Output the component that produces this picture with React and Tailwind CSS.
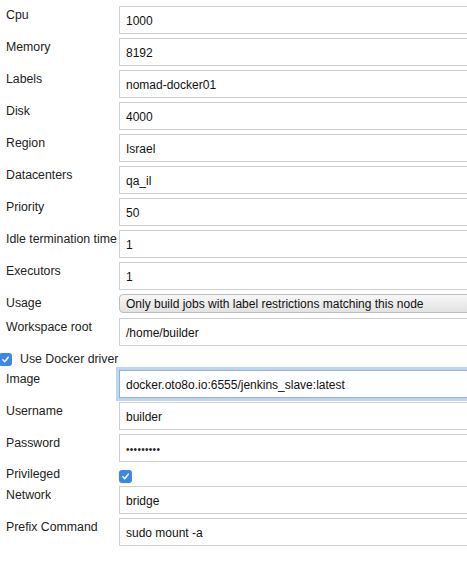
import React from "react";

const FONT = { fontFamily: '"Liberation Sans", Arial, sans-serif' };

function Field({ label, value, focused }) {
  return (
    <div className="flex h-[28px] items-start">
      <div className="w-[119px] shrink-0 pl-[6px] pt-[1px] text-[12.3px] leading-[16px] text-[#222]">
        {label}
      </div>
      <div
        className={
          "flex h-[28px] w-[400px] shrink-0 items-center border bg-white pl-[6px] pt-[2px] text-[12px] text-[#111] " +
          (focused
            ? "border-[#8fb2e0] shadow-[0_0_0_3px_#bcd5f3]"
            : "border-[#cfcfcf]")
        }
      >
        {value}
      </div>
    </div>
  );
}

function Check({ className }) {
  return (
    <div
      className={
        "flex h-[13px] w-[13px] shrink-0 items-center justify-center rounded-[3px] bg-[#3a87f2] " +
        (className || "")
      }
    >
      <svg width="9" height="9" viewBox="0 0 9 9">
        <path
          d="M1.8 4.8 L3.7 6.7 L7.3 2.2"
          fill="none"
          stroke="#fff"
          strokeWidth="1.5"
          strokeLinecap="round"
          strokeLinejoin="round"
        />
      </svg>
    </div>
  );
}

export default function App() {
  const top = [
    ["Cpu", "1000"],
    ["Memory", "8192"],
    ["Labels", "nomad-docker01"],
    ["Disk", "4000"],
    ["Region", "Israel"],
    ["Datacenters", "qa_il"],
    ["Priority", "50"],
    ["Idle termination time", "1"],
    ["Executors", "1"],
  ];
  return (
    <div
      className="w-[467px] h-[577px] overflow-hidden bg-white pt-[6px]"
      style={FONT}
    >
      <div className="flex flex-col gap-[4px]">
        {top.map(([l, v]) => (
          <Field key={l} label={l} value={v} />
        ))}
        <div className="flex h-[20px] items-start">
          <div className="w-[119px] shrink-0 pl-[6px] pt-[1px] text-[12.3px] leading-[16px] text-[#222]">
            Usage
          </div>
          <div className="flex h-[19px] w-[400px] shrink-0 items-center rounded-l-[4px] border border-[#bdbdbd] bg-gradient-to-b from-[#f7f7f7] to-[#e2e2e2] pl-[6px] text-[12px] text-[#111]">
            Only build jobs with label restrictions matching this node
          </div>
        </div>
        <Field label="Workspace root" value="/home/builder" />
        <div className="flex h-[16px] items-center">
          <Check className="-ml-[1px] mt-[2px]" />
          <div className="ml-[8px] pt-[1px] text-[12.3px] leading-[16px] text-[#222]">
            Use Docker driver
          </div>
        </div>
        <Field
          label="Image"
          value="docker.oto8o.io:6555/jenkins_slave:latest"
          focused
        />
        <Field label="Username" value="builder" />
        <Field
          label="Password"
          value={
            <span className="text-[10px] tracking-[0.3px] text-[#222]">
              •••••••••
            </span>
          }
        />
        <div className="flex h-[16px] items-start">
          <div className="w-[119px] shrink-0 pl-[6px] text-[12.3px] leading-[16px] text-[#222]">
            Privileged
          </div>
          <Check className="mt-[4px]" />
        </div>
        <Field label="Network" value="bridge" />
        <Field label="Prefix Command" value="sudo mount -a" />
      </div>
    </div>
  );
}
